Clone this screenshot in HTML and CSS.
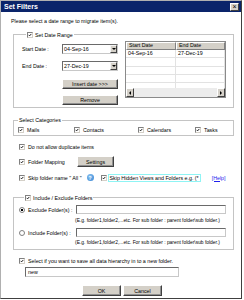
FILE: index.html
```html
<!DOCTYPE html>
<html>
<head>
<meta charset="utf-8">
<title>Set Filters</title>
<link rel="stylesheet" href="styles.css">
</head>
<body>
<div class="window">
  <div class="titlebar">
    <span class="title">Set Filters</span>
    <span class="close">×</span>
  </div>
  <div class="body">
    <p class="intro">Please select a date range to migrate item(s).</p>

    <fieldset class="group g-date">
      <legend><span class="cb"><svg viewBox="0 0 6 6"><path d="M1 2.8l1.4 1.5L5 1.4"/></svg></span>Set Date Range</legend>
      <div class="date-wrap">
        <div class="date-form">
          <span class="lbl l-start">Start Date :</span>
          <div class="select s-start"><span class="val">04-Sep-16</span><span class="drop"><i></i></span></div>
          <span class="lbl l-end">End Date :</span>
          <div class="select s-end"><span class="val">27-Dec-19</span><span class="drop"><i></i></span></div>
          <button class="btn b-insert">Insert date &gt;&gt;&gt;</button>
          <button class="btn b-remove">Remove</button>
        </div>
        <div class="table">
          <div class="thead"><span>Start Date</span><span>End Date</span></div>
          <div class="tbody">
            <div class="tr"><span>04-Sep-16</span><span>27-Dec-19</span></div>
            <div class="tr"><span></span><span></span></div>
            <div class="tr"><span></span><span></span></div>
            <div class="tr"><span></span><span></span></div>
            <div class="tr"><span></span><span></span></div>
          </div>
          <div class="hscroll"><span class="sbtn"><i class="al"></i></span><span class="track"></span><span class="sbtn"><i class="ar"></i></span></div>
        </div>
      </div>
    </fieldset>

    <fieldset class="group g-cat">
      <legend>Select Categories</legend>
      <div class="cats">
        <label class="opt"><span class="cb"><svg viewBox="0 0 6 6"><path d="M1 2.8l1.4 1.5L5 1.4"/></svg></span>Mails</label>
        <label class="opt"><span class="cb"><svg viewBox="0 0 6 6"><path d="M1 2.8l1.4 1.5L5 1.4"/></svg></span>Contacts</label>
        <label class="opt"><span class="cb"><svg viewBox="0 0 6 6"><path d="M1 2.8l1.4 1.5L5 1.4"/></svg></span>Calendars</label>
        <label class="opt"><span class="cb"><svg viewBox="0 0 6 6"><path d="M1 2.8l1.4 1.5L5 1.4"/></svg></span>Tasks</label>
      </div>
    </fieldset>

    <div class="row r-dup"><label class="opt"><span class="cb"><svg viewBox="0 0 6 6"><path d="M1 2.8l1.4 1.5L5 1.4"/></svg></span>Do not allow duplicate items</label></div>
    <div class="row r-map"><label class="opt w-map"><span class="cb"><svg viewBox="0 0 6 6"><path d="M1 2.8l1.4 1.5L5 1.4"/></svg></span>Folder Mapping</label><button class="btn b-settings">Settings</button></div>
    <div class="row r-skip">
      <label class="opt"><span class="cb"><svg viewBox="0 0 6 6"><path d="M1 2.8l1.4 1.5L5 1.4"/></svg></span>Skip folder name " All "</label>
      <span class="help">?</span>
      <label class="opt o-hidden"><span class="cb"><svg viewBox="0 0 6 6"><path d="M1 2.8l1.4 1.5L5 1.4"/></svg></span><span class="focus">Skip Hidden Views and Folders e.g. (*</span></label>
      <a class="link">[Help]</a>
    </div>

    <fieldset class="group g-inc">
      <legend><span class="cb"><svg viewBox="0 0 6 6"><path d="M1 2.8l1.4 1.5L5 1.4"/></svg></span>Include / Exclude Folders</legend>
      <div class="frow fr-ex"><label class="opt w-rad"><span class="radio on"></span>Exclude Folder(s) :</label><span class="input"></span></div>
      <p class="hint h-ex">(E.g. folder1,folder2,...etc. For sub folder : parent folder\sub folder.)</p>
      <div class="frow fr-in"><label class="opt w-rad"><span class="radio"></span>Include Folder(s) :</label><span class="input"></span></div>
      <p class="hint h-in">(E.g. folder1,folder2,...etc. For sub folder : parent folder\sub folder.)</p>
    </fieldset>

    <div class="row r-save"><label class="opt"><span class="cb"><svg viewBox="0 0 6 6"><path d="M1 2.8l1.4 1.5L5 1.4"/></svg></span>Select if you want to save all data hierarchy in to a new folder.</label></div>
    <div class="input i-new">new</div>
    <div class="actions"><button class="btn b-ok">OK</button><button class="btn b-cancel">Cancel</button></div>
  </div>
</div>
</body>
</html>
```

FILE: styles.css
```css
* { box-sizing: border-box; }
html, body { margin: 0; padding: 0; background: #fff; }
body {
  font-family: "Liberation Sans", Arial, sans-serif;
  font-size: 5.3px;
  line-height: 6px;
  color: #000;
}
.window {
  width: 242px;
  height: 299px;
  border: 1px solid #b0b0b0;
  border-right-color: #404040;
  border-bottom-color: #404040;
  background: #fff;
  display: flex;
  flex-direction: column;
}
.titlebar {
  height: 11px;
  flex: none;
  background: #0a246a;
  display: flex;
  align-items: center;
  justify-content: space-between;
  padding: 0 2px 0 3px;
}
.title { color: #fff; font-weight: bold; font-size: 7px; line-height: 8px; }
.close {
  width: 9px;
  height: 8px;
  background: #d4d0c8;
  border: 1px solid;
  border-color: #fff #404040 #404040 #fff;
  font-size: 7px;
  line-height: 6px;
  display: flex;
  align-items: center;
  justify-content: center;
  color: #000;
}
.body { padding: 0 0 0 12px; }
.intro { margin: 6px 0 0 -2px; height: 6px; }

.group {
  margin: 0;
  padding: 0;
  width: 221px;
  border: 1px solid #c4c4c4;
  min-width: 0;
}
.group legend {
  display: flex;
  align-items: center;
  gap: 2px;
  padding: 0 1px;
  margin-left: 4px;
  height: 7px;
}
.g-date { margin-top: 7px; padding: 3px 6px 2px 8px; }
.date-wrap { display: flex; align-items: flex-start; }
.date-form {
  display: grid;
  grid-template-columns: 40px 56px;
  align-items: center;
}
.lbl { grid-column: 1; }
.select, .btn { grid-column: 2; }
.l-start, .s-start { margin-top: 3px; }
.l-end, .s-end { margin-top: 7px; }
.b-insert { margin-top: 8px; }
.b-remove { margin-top: 6px; }

.select {
  height: 10px;
  border: 1px solid #6a6a6a;
  border-right-color: #c8c8c8;
  border-bottom-color: #c8c8c8;
  background: #fff;
  display: flex;
  align-items: center;
  justify-content: space-between;
  padding-left: 1px;
}
.drop {
  width: 7px;
  height: 8px;
  background: #d4d0c8;
  border: 1px solid;
  border-color: #f4f4f4 #404040 #404040 #f4f4f4;
  display: flex;
  align-items: center;
  justify-content: center;
}
.drop i {
  width: 0; height: 0;
  border-left: 2px solid transparent;
  border-right: 2px solid transparent;
  border-top: 2px solid #000;
}
.btn {
  font: inherit;
  height: 10px;
  padding: 0;
  background: #d4d0c8;
  border: 1px solid;
  border-color: #fff #404040 #404040 #fff;
  box-shadow: inset -1px -1px 0 #909090;
  color: #000;
  line-height: 6px;
}

.table {
  margin-left: 7px;
  width: 101px;
  height: 57px;
  border: 1px solid #8a8a8a;
  display: flex;
  flex-direction: column;
  background: #fff;
}
.thead, .tr { display: grid; grid-template-columns: 50px 1fr; }
.thead { height: 8px; background: #d4d0c8; flex: none; }
.thead span {
  border-right: 1px solid #808080;
  border-bottom: 1px solid #808080;
  border-top: 1px solid #fff;
  border-left: 1px solid #fff;
  padding-left: 2px;
  line-height: 5px;
}
.tbody { flex: 1; overflow: hidden; }
.tr { height: 8.3px; }
.tr span { border-right: 1px solid #e2e2e2; border-bottom: 1px solid #e2e2e2; padding-left: 2px; line-height: 7px; }
.hscroll { height: 9px; flex: none; display: flex; background: #ececec; }
.sbtn {
  width: 8px;
  background: #d4d0c8;
  border: 1px solid;
  border-color: #fff #404040 #404040 #fff;
  display: flex;
  align-items: center;
  justify-content: center;
}
.track { flex: 1; }
.al, .ar { width: 0; height: 0; border-top: 2px solid transparent; border-bottom: 2px solid transparent; }
.al { border-right: 2px solid #000; }
.ar { border-left: 2px solid #000; }

.opt { display: flex; align-items: center; gap: 3px; white-space: nowrap; }
.cb {
  width: 6px;
  height: 6px;
  flex: none;
  border: 1px solid #808080;
  border-right-color: #d4d0c8;
  border-bottom-color: #d4d0c8;
  background: #fff;
  display: flex;
}
.cb svg { width: 4px; height: 4px; }
.cb path { fill: none; stroke: #000; stroke-width: 1.3; }

.g-cat { margin-top: 9px; padding: 3px 0 2px 4px; }
.g-cat legend { margin-left: 0; height: 6px; }
.cats { display: grid; grid-template-columns: 56px 64px 57px 1fr; height: 7px; align-items: center; }

.row { display: flex; align-items: center; padding-left: 6px; }
.r-dup { margin-top: 7px; height: 7px; }
.r-map { margin-top: 6px; height: 11px; }
.w-map { width: 58px; }
.b-settings { width: 37px; height: 11px; }
.r-skip { margin-top: 7px; height: 7px; }
.help {
  margin-left: 5px;
  width: 7px;
  height: 7px;
  border-radius: 50%;
  background: radial-gradient(circle at 40% 35%, #8cc4f2, #2f7fd0);
  color: #fff;
  font-weight: bold;
  font-size: 5px;
  display: flex;
  align-items: center;
  justify-content: center;
}
.o-hidden { margin-left: 7px; gap: 2px; }
.focus { outline: 1px solid #8ff4f4; padding: 0 1px; }
.link { margin-left: 12px; color: #2020ee; text-decoration: underline; }

.g-inc { margin-top: 13px; padding: 4px 7px 3px 5px; }
.g-inc legend { margin-left: 5px; }
.frow { display: flex; align-items: center; height: 9px; }
.w-rad { width: 57px; gap: 3px; }
.radio {
  width: 6px;
  height: 6px;
  flex: none;
  border-radius: 50%;
  border: 1px solid #808080;
  background: #fff;
}
.radio.on { background: radial-gradient(circle, #000 0 1px, #fff 1.4px); }
.input {
  display: block;
  flex: 1;
  height: 9px;
  border: 1px solid #6a6a6a;
  border-right-color: #c8c8c8;
  border-bottom-color: #c8c8c8;
  background: #fff;
}
.hint { margin: 4px 0 0 56px; height: 6px; white-space: nowrap; font-size: 4.9px; }
.fr-in { margin-top: 4px; }
.h-in { margin-top: 3px; }

.r-save { margin-top: 7px; height: 7px; }
.i-new { margin: 3px 0 0 12px; width: 154px; height: 10px; padding-left: 2px; line-height: 8px; }
.actions { display: flex; gap: 2px; margin: 8px 0 0 69px; }
.b-ok, .b-cancel { width: 39px; height: 11px; }
```
